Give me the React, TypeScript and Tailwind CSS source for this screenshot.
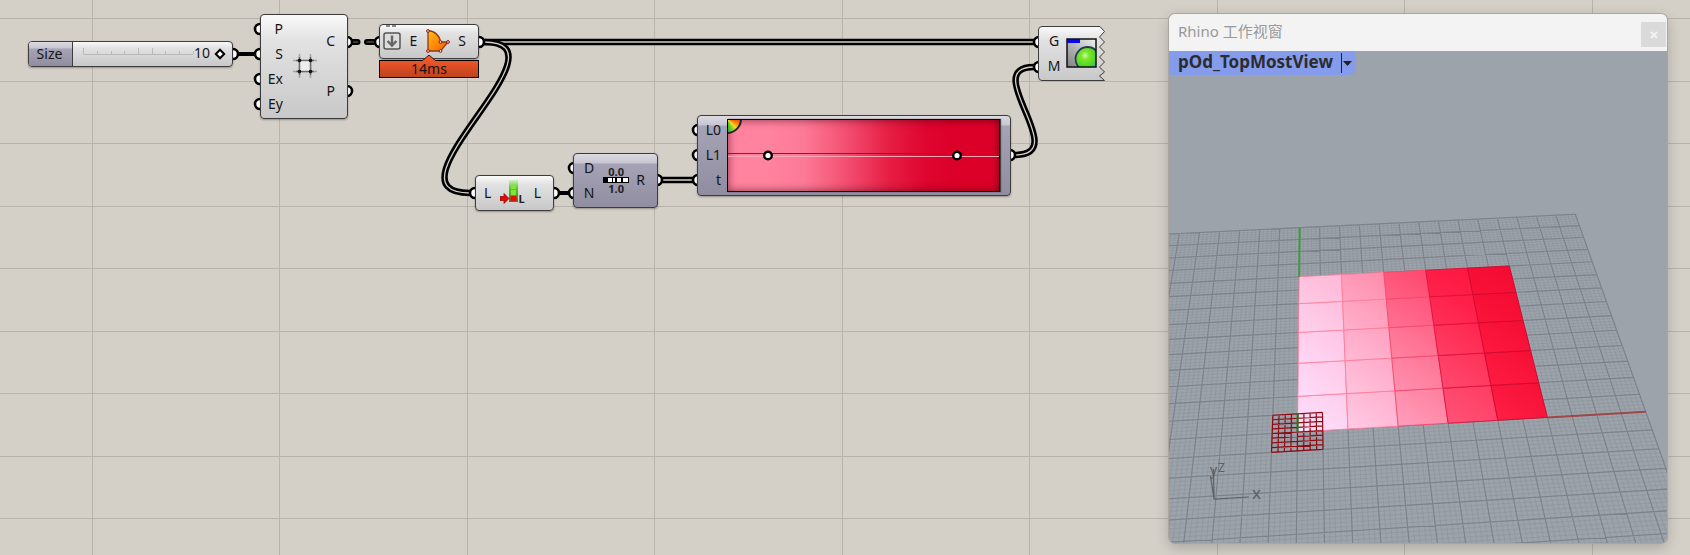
// src/App.tsx
import React, { useState } from 'react';

type Point = [number, number];

const gridColumns = [92, 279, 467, 654, 842, 1029, 1217, 1404, 1592, 1779];
const gridRows = [18, 81, 143, 206, 268, 331, 393, 456, 518, 581, 643];

const ports: Point[] = [
  [233, 54],
  [260, 29], [260, 54], [260, 79], [260, 104],
  [347, 42], [347, 91],
  [380, 42], [479, 42],
  [475, 193], [554, 193],
  [574, 168], [574, 193], [657, 180],
  [698, 130], [698, 155], [698, 180], [1010, 155],
  [1039, 42], [1039, 67],
];

const doubleWires = [
  'M484 42H1034',
  'M484 42C575 42 377 193 470 193',
  'M662 180H693',
  'M1015 155C1073 155 978 67 1034 67',
];

const lightNode = 'bg-linear-to-b from-[#fafafa] via-[#e2e2e2] via-25% to-[#c8c8c8]';
const purpleNode = 'bg-[linear-gradient(#dcdbe3_0px,#c6c5d1_9px,#a5a3b5_10px,#8f8d9f_100%)]';
const nodeBase = 'absolute flex items-center rounded border border-[#3c3c3c] shadow-[0_1px_2px_rgba(0,0,0,0.3)]';

const Canvas: React.FC = () => (
  <svg className="absolute inset-0 h-full w-full" aria-hidden="true">
    <g fill="#b8b4ac">
      {gridColumns.map((x) => <rect key={x} x={x} y="0" width="1" height="100%" />)}
      {gridRows.map((y) => <rect key={y} x="0" y={y} width="100%" height="1" />)}
    </g>
    <g fill="none" stroke="#000" strokeWidth="4" strokeLinecap="round">
      <path d="M239 54H254" />
      <path d="M560 193H568" />
    </g>
    <g fill="none" strokeLinecap="round">
      <path d="M352 42H357.500M367 42H374" stroke="#000" strokeWidth="6" />
      <path d="M352 42H357.500M367 42H374" stroke="#77756f" strokeWidth="1.200" />
    </g>
    {doubleWires.map((d) => (
      <g key={d} fill="none" strokeLinecap="round">
        <path d={d} stroke="#000" strokeWidth="6.500" />
        <path d={d} stroke="#d4d0c8" strokeWidth="1.300" />
      </g>
    ))}
    <g fill="#fff" stroke="#000" strokeWidth="2.600">
      {ports.map(([x, y]) => <circle key={`${x}-${y}`} cx={x} cy={y} r="5" />)}
    </g>
  </svg>
);

const SizeSlider: React.FC = () => {
  const [size, setSize] = useState<number>(10);

  return (
    <div className={`${nodeBase} ${lightNode} left-7 top-[41px] h-[26px] w-[205px]`}>
      <label
        htmlFor="size"
        className="flex h-full w-11 items-center justify-center rounded-l-[3px] border-r border-[#3c3c3c] bg-[linear-gradient(#dcdbe3_0px,#c6c5d1_6px,#a5a3b5_7px,#8f8d9f_100%)] pb-0.5 pr-0.5"
      >
        Size
      </label>
      <div className="relative h-full flex-1">
        <svg className="absolute left-2.5 top-1 h-4 w-36" aria-hidden="true">
          <path
            d="M.5 2V8.500H110M14.500 5V8M28.500 5V8M41.500 5V8M55.500 2V8M69.500 2V8M82.500 5V8M96.500 5V8M110.500 5V8"
            fill="none"
            stroke="#b9b9b9"
          />
        </svg>
        <output htmlFor="size" className="absolute right-[22px] top-0 leading-[22px]">{size}</output>
        <input
          id="size"
          type="range"
          min={0}
          max={10}
          value={size}
          onChange={(e) => setSize(Number(e.target.value))}
          className="absolute inset-y-0 left-1.5 right-2 h-full appearance-none bg-transparent [&::-webkit-slider-thumb]:size-[8px] [&::-webkit-slider-thumb]:rotate-45 [&::-webkit-slider-thumb]:appearance-none [&::-webkit-slider-thumb]:border-2 [&::-webkit-slider-thumb]:border-black [&::-webkit-slider-thumb]:bg-white"
        />
      </div>
    </div>
  );
};

const SquareGridNode: React.FC = () => (
  <div className={`${nodeBase} ${lightNode} left-[260px] top-3.5 h-[105px] w-[88px] justify-between pb-0.5 pr-3`}>
    <ul className="w-[22px] text-right leading-[25px]">
      <li>P</li>
      <li>S</li>
      <li>Ex</li>
      <li>Ey</li>
    </ul>
    <svg className="size-7" viewBox="0 0 28 28" aria-hidden="true">
      <g stroke="#555" strokeWidth="1.600">
        <path d="M8.500 2V26M19.500 2V26M2 8.500H26M2 19.500H26" opacity=".4" />
        <path d="M8.500 5V23M19.500 5V23M5 8.500H23M5 19.500H23" opacity=".7" />
      </g>
      <path d="M9.500 9.500h9v9h-9z" fill="#eee" />
      <g fill="#111">
        <circle cx="8.500" cy="8.500" r="1.800" />
        <circle cx="19.500" cy="8.500" r="1.800" />
        <circle cx="8.500" cy="19.500" r="1.800" />
        <circle cx="19.500" cy="19.500" r="1.800" />
      </g>
    </svg>
    <ul className="text-right leading-[50px]">
      <li>C</li>
      <li>P</li>
    </ul>
  </div>
);

const BoundaryNode: React.FC = () => (
  <>
    <div className={`${nodeBase} ${lightNode} left-[379px] top-6 h-[35px] w-[100px] justify-between pb-0.5 pl-[3px] pr-3`}>
      <svg className="size-[18px]" viewBox="0 0 18 18" aria-hidden="true">
        <rect x="1" y="1" width="16" height="16" rx="2" fill="#ddd" stroke="#555" strokeWidth="1.500" />
        <path d="M9 3.500V13M4.500 9L9 13.500L13.500 9" fill="none" stroke="#666" strokeWidth="2.400" />
      </svg>
      <span>E</span>
      <svg className="size-6" viewBox="0 0 24 24" aria-hidden="true">
        <defs>
          <linearGradient id="orange" x1="0" y1="0" x2="1" y2="1">
            <stop offset="0" stopColor="#ffc21c" />
            <stop offset=".5" stopColor="#ff8a08" />
            <stop offset="1" stopColor="#fa6200" />
          </linearGradient>
        </defs>
        <path d="M2 1.500C9 2 14 7 14.500 13H22L14.500 22H2Z" fill="url(#orange)" stroke="#8c3a10" strokeWidth="1.300" />
        <g fill="#f3d9cf" stroke="#8a1a12">
          <circle cx="2" cy="2" r="1.400" />
          <circle cx="14.500" cy="13" r="1.400" />
          <circle cx="22" cy="13" r="1.400" />
          <circle cx="14.500" cy="22" r="1.400" />
          <circle cx="2" cy="22" r="1.400" />
        </g>
      </svg>
      <span>S</span>
      <svg className="absolute left-1.5 top-0 h-1 w-3" aria-hidden="true">
        <path d="M0 1H4M6 1H10" stroke="#888" strokeWidth="2" />
      </svg>
    </div>
    <div className="absolute left-[379px] top-[60px] flex h-[18px] w-[100px] items-center justify-center border border-black bg-linear-to-b from-[#ee5527] to-[#bd431d] pb-0.5">
      <svg className="absolute -top-1.5 left-[42px] h-1.5 w-3.5" viewBox="0 0 14 6" aria-hidden="true">
        <path d="M0 6L7 0L14 6" fill="#f05627" stroke="#222" />
      </svg>
      <span>14ms</span>
    </div>
  </>
);

const ListLengthNode: React.FC = () => (
  <div className={`${nodeBase} ${lightNode} left-[475px] top-[175px] h-9 w-[79px] justify-between pb-0.5 pl-2 pr-3`}>
    <span>L</span>
    <svg className="size-[26px]" viewBox="0 0 26 26" aria-hidden="true">
      <defs>
        <linearGradient id="bar" x1="0" y1="0" x2="0" y2="1">
          <stop offset="0" stopColor="#7be03a" stopOpacity=".2" />
          <stop offset=".35" stopColor="#5ccc1c" />
          <stop offset="1" stopColor="#2f8f08" />
        </linearGradient>
      </defs>
      <rect x="9" y="1" width="9" height="22" fill="url(#bar)" />
      <path d="M11 6h5v4h-5zM11 11h5v5h-5z" fill="#7fe63c" />
      <rect x="10.500" y="17" width="6" height="5" fill="#e60c0c" />
      <path d="M0 17.500H4V14.500L9 19.500L4 24.500V21.500H0Z" fill="#e00b0b" stroke="#8b0000" strokeWidth=".7" />
      <text x="18.500" y="24" fontSize="11" fontWeight="700" fill="#222">L</text>
    </svg>
    <span>L</span>
  </div>
);

const RemapNode: React.FC = () => (
  <div className={`${nodeBase} ${purpleNode} left-[573px] top-[153px] h-[55px] w-[85px] justify-between pb-0.5 pl-2 pr-3`}>
    <ul className="w-3.5 text-center leading-[25px]">
      <li>D</li>
      <li>N</li>
    </ul>
    <div className="flex w-[26px] flex-col items-center text-[11px] font-bold leading-[11px] text-[#222]">
      <span>0.0</span>
      <svg className="h-[6px] w-[26px]" viewBox="0 0 26 6" aria-hidden="true">
        <rect width="26" height="6" fill="#000" />
        <path d="M5 1h4v4h-4zM10 1h2v4h-2zM14 1h4v4h-4zM20 1h5v4h-5z" fill="#fff" />
      </svg>
      <span>1.0</span>
    </div>
    <span>R</span>
  </div>
);

const GradientNode: React.FC = () => (
  <div className={`${nodeBase} ${purpleNode} left-[697px] top-[115px] h-[81px] w-[314px] pr-2.5`}>
    <ul className="w-[29px] pb-0.5 pr-1.5 text-right leading-[25px]">
      <li>L0</li>
      <li>L1</li>
      <li>t</li>
    </ul>
    <div className="relative h-[73px] flex-1 overflow-hidden border border-black bg-[linear-gradient(90deg,#ff829f_15%,#fd7a97_28%,#f6597a_40%,#ee3b5f_50%,#e61c42_60%,#df0530_73%,#dc0028_84%)] shadow-[1px_0_1px_#444]">
      <div className="absolute inset-0 shadow-[inset_0_0_9px_rgba(60,0,20,0.6)]" />
      <svg className="absolute inset-0 h-full w-full" aria-hidden="true">
        <path d="M0 33.500H272" stroke="#8a1838" />
        <path d="M0 36.500H272" stroke="#f7a6b8" />
        <circle cx="40" cy="35.500" r="3.800" fill="#fff" stroke="#000" strokeWidth="2.400" />
        <circle cx="229" cy="35.500" r="3.800" fill="#fff" stroke="#000" strokeWidth="2.400" />
      </svg>
      <div className="absolute -left-4 -top-4 size-[30px] rounded-full border-2 border-[#222] bg-[conic-gradient(from_90deg,#f33b10,#fc7a10_20deg,#f2dd20_45deg,#5fc828_70deg,#18a848_90deg)]" />
    </div>
  </div>
);

const PreviewNode: React.FC = () => (
  <div className="absolute left-[1038px] top-[26px] flex h-[55px] w-[67px] items-center pb-0.5 pl-2">
    <svg className="absolute inset-0 h-full w-full" viewBox="0 0 67 55" aria-hidden="true">
      <defs>
        <linearGradient id="torn" x1="0" y1="0" x2="0" y2="1">
          <stop offset="0" stopColor="#fafafa" />
          <stop offset=".25" stopColor="#e2e2e2" />
          <stop offset="1" stopColor="#c8c8c8" />
        </linearGradient>
      </defs>
      <path
        d="M4 .5H62L66.500 5.500L61.500 11L66.500 16L61.500 21L66.500 26L61.500 31L66.500 36L61.500 41L66.500 46L61.500 50L66.500 54.500H4Q.5 54.500 .5 51V4Q.5 .5 4 .5Z"
        fill="url(#torn)"
        stroke="#3c3c3c"
      />
    </svg>
    <ul className="relative w-4 text-center leading-[25px]">
      <li>G</li>
      <li>M</li>
    </ul>
    <svg className="relative ml-1 h-[30px] w-[31px]" viewBox="0 0 31 30" aria-hidden="true">
      <defs>
        <linearGradient id="panel" x1="0" y1="1" x2="1" y2="0">
          <stop offset="0" stopColor="#808080" />
          <stop offset="1" stopColor="#f0f0f0" />
        </linearGradient>
        <radialGradient id="ball" cx=".4" cy=".36" r=".65">
          <stop offset="0" stopColor="#d2f8b0" />
          <stop offset=".25" stopColor="#7be82c" />
          <stop offset=".65" stopColor="#55d622" />
          <stop offset="1" stopColor="#10b8a4" />
        </radialGradient>
        <clipPath id="frame"><path d="M1 1h29v28H1z" /></clipPath>
      </defs>
      <rect x="1" y="1" width="29" height="28" fill="url(#panel)" />
      <g clipPath="url(#frame)">
        <circle cx="21.500" cy="21" r="12" fill="url(#ball)" stroke="#243a52" strokeWidth="1.800" />
      </g>
      <rect x="1" y="1" width="13" height="4" fill="#0808f0" />
      <rect x="1" y="1" width="29" height="28" fill="none" stroke="#111" strokeWidth="1.500" />
    </svg>
  </div>
);

// ground plane corners on screen: (0,0) (extent,0) (extent,extent) (0,extent)
const extent = 14;
const [x0, y0] = [1297.5, 432];
const [x1, y1] = [1645.7, 411.7];
const [x2, y2] = [1575.3, 214.3];
const [x3, y3] = [1299.7, 227.7];

const sx = x0 - x1 + x2 - x3;
const sy = y0 - y1 + y2 - y3;
const det = (x1 - x2) * (y3 - y2) - (x3 - x2) * (y1 - y2);
const g = (sx * (y3 - y2) - (x3 - x2) * sy) / det;
const h = ((x1 - x2) * sy - sx * (y1 - y2)) / det;

const project = (px: number, py: number): string => {
  const u = px / extent;
  const v = py / extent;
  const w = g * u + h * v + 1;
  const x = ((x1 - x0 + g * x1) * u + (x3 - x0 + h * x3) * v + x0) / w;
  const y = ((y1 - y0 + g * y1) * u + (y3 - y0 + h * y3) * v + y0) / w;
  return `${x.toFixed(2)} ${y.toFixed(2)}`;
};

const gridPath = (from: number, to: number, step: number): string => {
  const count = Math.round((to - from) / step);
  let d = '';
  for (let i = 0; i <= count; i++) {
    const p = from + i * step;
    d += `M${project(p, from)}L${project(p, to)}M${project(from, p)}L${project(to, p)}`;
  }
  return d;
};

// rows from the x axis upwards, each cell runs light to dark
const cellColors: [string, string][][] = [
  [['#fde0fd', '#fecdec'], ['#ffcbe6', '#ffadca'], ['#ff9fbe', '#ff7c9b'], ['#ff5379', '#ff3b60'], ['#ff1f45', '#f50f35']],
  [['#fedcfa', '#fec8e6'], ['#ffc4de', '#ffa7c5'], ['#ff91b0', '#ff7292'], ['#ff4a70', '#ff2f56'], ['#ff1c42', '#f40e34']],
  [['#fed8f6', '#ffc3e2'], ['#ffbad6', '#ffa0be'], ['#ff83a3', '#ff6486'], ['#ff3f66', '#ff244c'], ['#ff183f', '#f40d33']],
  [['#fed1ee', '#ffbedb'], ['#ffb0cd', '#ff97b5'], ['#ff7194', '#ff557a'], ['#ff3059', '#ff1a43'], ['#fc143b', '#f30c32']],
  [['#fec9e6', '#ffb8d4'], ['#ffa5c3', '#ff8bab'], ['#ff6286', '#ff466c'], ['#ff244d', '#fd163f'], ['#fa1138', '#f20b31']],
];
const edgeColors = ['#ff859f', '#ff7f9c', '#f8486c', '#e0103c', '#d00830'];

const GroundPlane: React.FC = () => (
  <svg className="absolute inset-0 h-full w-full" viewBox="1169 51 498 492" preserveAspectRatio="xMinYMin slice" role="img" aria-label="Perspective view">
    <path d={gridPath(-extent, extent, 0.2)} fill="none" stroke="#878d96" strokeWidth=".6" opacity=".7" />
    <path d={gridPath(-extent, extent, 1)} fill="none" stroke="#7d818b" strokeWidth="1.100" />
    {cellColors.map((row, r) => row.map(([light, dark], c) => {
      const [x, y] = [c * 2, r * 2];
      const id = `cell-${r}-${c}`;
      return (
        <g key={id}>
          <linearGradient id={id} x1="0" y1="1" x2="1" y2="0">
            <stop offset="0" stopColor={light} />
            <stop offset="1" stopColor={dark} />
          </linearGradient>
          <path
            d={`M${project(x, y)}L${project(x + 2, y)}L${project(x + 2, y + 2)}L${project(x, y + 2)}Z`}
            fill={`url(#${id})`}
            stroke={edgeColors[c]}
            strokeWidth=".9"
          />
        </g>
      );
    }))}
    <path d={`M${project(0, 10)}L${project(0, 14)}`} stroke="#3f9a3f" strokeWidth="2" />
    <path d={`M${project(10, 0)}L${project(14, 0)}`} stroke="#a04848" strokeWidth="2" />
    <path d={gridPath(-1, 1, 0.25)} fill="none" stroke="#8f0b12" strokeWidth="1.200" />
    <path d={`M${project(0, 0)}L${project(0, 1)}`} stroke="#187a18" strokeWidth="2" />
    <g fill="none" stroke="#5e6064" strokeWidth="1.200">
      <path d="M1249 497L1214 499L1213.500 469M1214 499L1210.500 476" />
    </g>
    <g fill="#5e6064">
      <text x="1252" y="499" fontSize="17">x</text>
      <text x="1210" y="475" fontSize="14">y</text>
      <text x="1218" y="472" fontSize="12">Z</text>
    </g>
  </svg>
);

const RhinoWindow: React.FC = () => (
  <section className="absolute bottom-3 right-[23px] top-3.5 flex w-[498px] flex-col overflow-hidden rounded-md shadow-[0_0_0_1px_#aaa69e,0_4px_14px_rgba(0,0,0,0.22)]">
    <header className="flex h-[37px] shrink-0 items-center justify-between bg-[#f3f3f3] pl-[9px] pr-px">
      <h1 className="pb-0.5 text-[15px] text-[#999]">Rhino 工作视窗</h1>
      <button type="button" aria-label="Close" className="mt-1 flex size-[25px] items-center justify-center bg-[#dadada]">
        <svg className="size-2" viewBox="0 0 8 8" aria-hidden="true">
          <path d="M1 1L7 7M7 1L1 7" stroke="#f3f3f3" strokeWidth="1.800" />
        </svg>
      </button>
    </header>
    <div className="relative flex-1 bg-[#9ca3ab]">
      <GroundPlane />
      <button type="button" className="relative flex h-6 items-center rounded-br-md bg-[#859cec] pl-[9px] pr-[3px] text-[17px] font-bold text-[#2c2c30]">
        <span className="pb-0.5">pOd_TopMostView</span>
        <span className="ml-2 mr-px h-5 w-px bg-[#222]" />
        <svg className="h-[5px] w-[9px]" viewBox="0 0 9 5" aria-hidden="true">
          <path d="M0 0H9L4.500 5Z" fill="#222" />
        </svg>
      </button>
    </div>
  </section>
);

const App: React.FC = () => {
  return (
    <main className="relative min-h-screen w-full overflow-hidden bg-[#d4d0c8] font-['Noto_Sans','Noto_Sans_CJK_SC',sans-serif] text-[14px] text-[#151515]">
      <Canvas />
      <SizeSlider />
      <SquareGridNode />
      <BoundaryNode />
      <ListLengthNode />
      <RemapNode />
      <GradientNode />
      <PreviewNode />
      <RhinoWindow />
    </main>
  );
};

export default App;
